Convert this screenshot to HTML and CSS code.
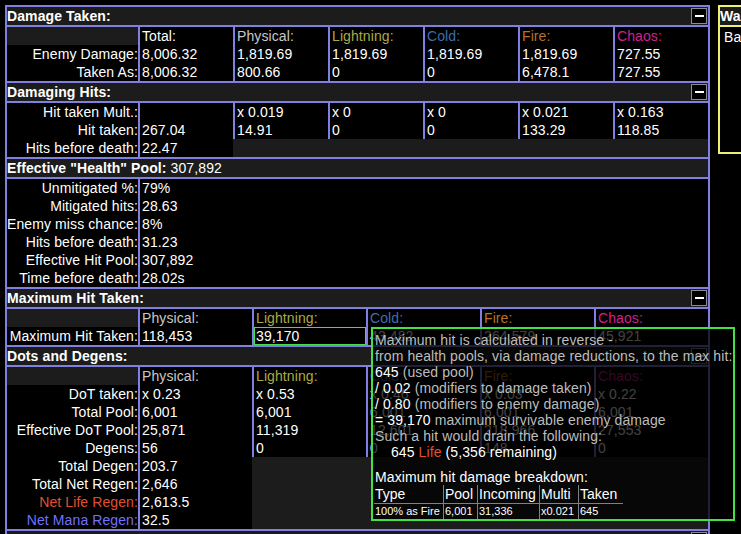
FILE: index.html
```html
<!DOCTYPE html>
<html>
<head>
<meta charset="utf-8">
<link rel="stylesheet" href="styles.css">
</head>
<body>
<div class="page">
  <div class="panel">
    <div class="hdr"><span>Damage Taken:</span><span class="btn"></span></div>
    <div class="grid c6">
      <div class="l blank"></div>
      <div class="v">Total:</div>
      <div class="v phys">Physical:</div>
      <div class="v light">Lightning:</div>
      <div class="v cold">Cold:</div>
      <div class="v fire">Fire:</div>
      <div class="v chaos">Chaos:</div>

      <div class="l">Enemy Damage:</div>
      <div class="v">8,006.32</div>
      <div class="v">1,819.69</div>
      <div class="v">1,819.69</div>
      <div class="v">1,819.69</div>
      <div class="v">1,819.69</div>
      <div class="v">727.55</div>

      <div class="l">Taken As:</div>
      <div class="v">8,006.32</div>
      <div class="v">800.66</div>
      <div class="v">0</div>
      <div class="v">0</div>
      <div class="v">6,478.1</div>
      <div class="v">727.55</div>
    </div>

    <div class="hdr"><span>Damaging Hits:</span><span class="btn"></span></div>
    <div class="grid c6">
      <div class="l">Hit taken Mult.:</div>
      <div class="v"></div>
      <div class="v">x 0.019</div>
      <div class="v">x 0</div>
      <div class="v">x 0</div>
      <div class="v">x 0.021</div>
      <div class="v">x 0.163</div>

      <div class="l">Hit taken:</div>
      <div class="v">267.04</div>
      <div class="v">14.91</div>
      <div class="v">0</div>
      <div class="v">0</div>
      <div class="v">133.29</div>
      <div class="v">118.85</div>

      <div class="l">Hits before death:</div>
      <div class="v">22.47</div>
      <div class="fill span5"></div>
    </div>

    <div class="hdr"><span>Effective "Health" Pool: <span class="hval">307,892</span></span></div>
    <div class="grid c1">
      <div class="l">Unmitigated %:</div><div class="v">79%</div>
      <div class="l">Mitigated hits:</div><div class="v">28.63</div>
      <div class="l">Enemy miss chance:</div><div class="v">8%</div>
      <div class="l">Hits before death:</div><div class="v">31.23</div>
      <div class="l">Effective Hit Pool:</div><div class="v">307,892</div>
      <div class="l">Time before death:</div><div class="v">28.02s</div>
    </div>

    <div class="hdr"><span>Maximum Hit Taken:</span><span class="btn"></span></div>
    <div class="grid c5">
      <div class="l blank"></div>
      <div class="v phys">Physical:</div>
      <div class="v light">Lightning:</div>
      <div class="v cold">Cold:</div>
      <div class="v fire">Fire:</div>
      <div class="v chaos">Chaos:</div>

      <div class="l">Maximum Hit Taken:</div>
      <div class="v">118,453</div>
      <div class="v hit">39,170</div>
      <div class="v">43,482</div>
      <div class="v">264,579</div>
      <div class="v">45,921</div>
    </div>

    <div class="hdr"><span>Dots and Degens:</span><span class="btn"></span></div>
    <div class="grid c5">
      <div class="l blank"></div>
      <div class="v phys">Physical:</div>
      <div class="v light">Lightning:</div>
      <div class="v cold">Cold:</div>
      <div class="v fire">Fire:</div>
      <div class="v chaos">Chaos:</div>

      <div class="l">DoT taken:</div>
      <div class="v">x 0.23</div>
      <div class="v">x 0.53</div>
      <div class="v">x 0.46</div>
      <div class="v">x 0.03</div>
      <div class="v">x 0.22</div>

      <div class="l">Total Pool:</div>
      <div class="v">6,001</div>
      <div class="v">6,001</div>
      <div class="v">6,001</div>
      <div class="v">6,001</div>
      <div class="v">6,001</div>

      <div class="l">Effective DoT Pool:</div>
      <div class="v">25,871</div>
      <div class="v">11,319</div>
      <div class="v">12,601</div>
      <div class="v">218,966</div>
      <div class="v">27,553</div>

      <div class="l">Degens:</div>
      <div class="v">56</div>
      <div class="v">0</div>
      <div class="v">0</div>
      <div class="v">148</div>
      <div class="v">0</div>

      <div class="l">Total Degen:</div>
      <div class="v">203.7</div>
      <div class="fill span4 rows4"></div>
      <div class="l">Total Net Regen:</div>
      <div class="v">2,646</div>
      <div class="l life">Net Life Regen:</div>
      <div class="v">2,613.5</div>
      <div class="l mana">Net Mana Regen:</div>
      <div class="v">32.5</div>
    </div>

    <div class="hdr"><span></span><span class="btn"></span></div>
  </div>

  <div class="warn">
    <div class="wh">Warnings:</div>
    <div class="wb">Base damage</div>
  </div>
</div>

<div class="tip">
  <div>Maximum hit is calculated in reverse -</div>
  <div>from health pools, via damage reductions, to the max hit:</div>
  <div><span class="w">645</span> (used pool)</div>
  <div><span class="w">/ 0.02</span> (modifiers to damage taken)</div>
  <div><span class="w">/ 0.80</span> (modifiers to enemy damage)</div>
  <div><span class="w">= 39,170</span> maximum survivable enemy damage</div>
  <div>Such a hit would drain the following:</div>
  <div class="w">    645 <span class="life">Life</span> (5,356 remaining)</div>
  <div class="spacer"></div>
  <div class="w">Maximum hit damage breakdown:</div>
  <div class="tbl">
    <div class="th">Type</div>
    <div class="th s">Pool</div>
    <div class="th s">Incoming</div>
    <div class="th s">Multi</div>
    <div class="th s">Taken</div>
    <div class="td">100% as Fire</div>
    <div class="td s">6,001</div>
    <div class="td s">31,336</div>
    <div class="td s">x0.021</div>
    <div class="td s">645</div>
  </div>
</div>
</body>
</html>
```

FILE: styles.css
```css
* {
  box-sizing: border-box;
}

html,
body {
  margin: 0;
  padding: 0;
}

body {
  background: #000;
  color: #fff;
  font-family: "Liberation Sans", Arial, sans-serif;
  font-size: 14px;
  letter-spacing: 0.1px;
  width: 741px;
  height: 534px;
  overflow: hidden;
}

.page {
  display: flex;
  align-items: flex-start;
  gap: 8px;
  padding: 5px 0 0 5px;
}

.panel {
  width: 705px;
  flex-shrink: 0;
  border: 2px solid #8080e0;
  background: #8080e0;
  display: flex;
  flex-direction: column;
  gap: 2px;
}

.hdr {
  height: 18px;
  line-height: 18px;
  background: #1c1c1c;
  font-weight: bold;
  display: flex;
  align-items: center;
  justify-content: space-between;
  padding-right: 1px;
  white-space: nowrap;
}

.hval {
  font-weight: normal;
}

.btn {
  width: 16px;
  height: 16px;
  border: 1px solid #8c8c8c;
  background: #000;
  display: flex;
  align-items: center;
  justify-content: center;
}

.btn::before {
  content: "";
  width: 9px;
  height: 2px;
  background: #fff;
}

.grid {
  display: grid;
  background: #000;
  grid-auto-rows: 18px;
  line-height: 18px;
  white-space: nowrap;
}

.c6 {
  grid-template-columns: 131px repeat(6, 1fr);
}

.c5 {
  grid-template-columns: 131px repeat(5, 1fr);
}

.c1 {
  grid-template-columns: 131px 1fr;
}

.l {
  text-align: right;
}

.v {
  border-left: 2px solid #8080e0;
  padding-left: 2px;
  overflow: hidden;
}

.blank {
  background: #1c1c1c;
}

.fill {
  background: #1c1c1c;
}

.span5 {
  grid-column: span 5;
}

.span4 {
  grid-column: 3 / span 4;
}

.rows4 {
  grid-row: span 4;
}

.hit {
  box-shadow: inset 0 0 0 1px #44e044;
}

.phys {
  color: #c8c8c8;
}

.light {
  color: #adaa47;
}

.cold {
  color: #3f6db3;
}

.fire {
  color: #b97123;
}

.chaos {
  color: #d02090;
}

.life {
  color: #e05030;
}

.mana {
  color: #7070ff;
}

.warn {
  width: 300px;
  height: 149px;
  flex-shrink: 0;
  border: 2px solid #eeee70;
  display: flex;
  flex-direction: column;
}

.wh {
  height: 20px;
  line-height: 18px;
  font-weight: bold;
  background: #1c1c1c;
  border-bottom: 2px solid #eeee70;
  white-space: nowrap;
}

.wb {
  padding: 1px 4px;
  line-height: 18px;
  white-space: nowrap;
}

.tip {
  position: absolute;
  left: 371px;
  top: 327px;
  width: 364px;
  height: 194px;
  border: 2px solid #44e044;
  background: rgba(0, 0, 0, 0.75);
  padding: 3px 0 0 2px;
  color: #bdbdbd;
  line-height: 16px;
}

.tip > div {
  white-space: pre;
}

.tip .w {
  color: #fff;
}

.tip .life {
  color: #e05030;
}

.spacer {
  height: 9px;
}

.tbl {
  display: grid;
  grid-template-columns: 69px 34px 62px 39px 45px;
  margin-left: -1px;
  color: #fff;
  letter-spacing: 0;
}

.tbl > div {
  padding-left: 1px;
  white-space: nowrap;
}

.th {
  height: 19px;
  line-height: 19px;
  border-bottom: 1px solid #808080;
}

.td {
  height: 15px;
  line-height: 15px;
  font-size: 11px;
}

.s {
  border-left: 1px solid #808080;
}
```
